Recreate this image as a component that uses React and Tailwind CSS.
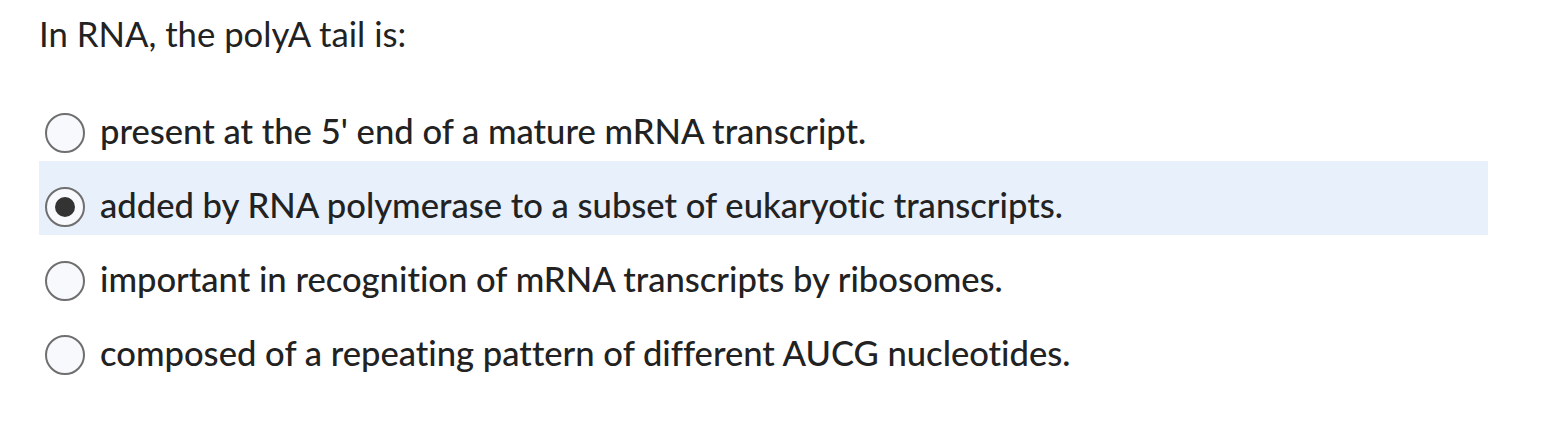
import React, { useState } from "react";

const options = [
  "present at the 5' end of a mature mRNA transcript.",
  "added by RNA polymerase to a subset of eukaryotic transcripts.",
  "important in recognition of mRNA transcripts by ribosomes.",
  "composed of a repeating pattern of different AUCG nucleotides.",
];

const Radio = ({ checked }) => (
  <span className="flex h-[40px] w-[40px] shrink-0 items-center justify-center rounded-full border-2 border-[#6f6f6f] bg-[#f8f9fd]">
    {checked && <span className="h-[20px] w-[20px] rounded-full bg-[#333333]" />}
  </span>
);

export default function App() {
  const [selected, setSelected] = useState(1);

  return (
    <div
      className="h-[426px] w-[1544px] bg-white pl-[39px] pt-[11px] text-[#222] [font-variant-ligatures:none]"
      style={{ fontFamily: "Lato, 'Noto Sans', sans-serif" }}
    >
      <p className="text-[34.7px] leading-[46px]">In RNA, the polyA tail is:</p>

      <div className="mt-[30px] w-[1449px]">
        {options.map((opt, i) => (
          <label
            key={i}
            onClick={() => setSelected(i)}
            className={`flex h-[74px] cursor-pointer items-center gap-[15px] pl-[6px] pt-[18px] ${
              selected === i ? "bg-[#e8f0fb]" : ""
            }`}
          >
            <Radio checked={selected === i} />
            <span className="pb-[4px] text-[34.6px] font-medium leading-none">{opt}</span>
          </label>
        ))}
      </div>
    </div>
  );
}
